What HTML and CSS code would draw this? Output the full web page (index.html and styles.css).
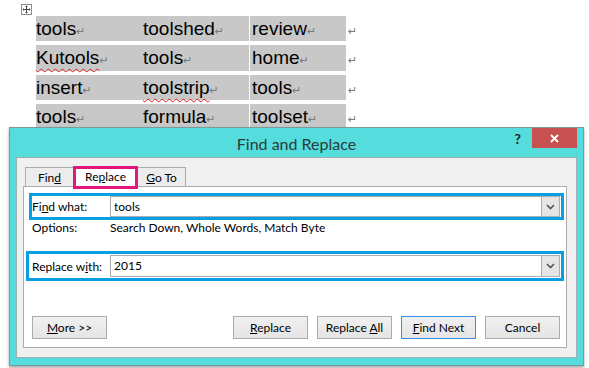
FILE: index.html
```html
<!DOCTYPE html>
<html lang="en">
<head>
    <meta charset="UTF-8">
    <meta name="viewport" content="width=device-width, initial-scale=1.0">
    <title>Find and Replace</title>
    <link rel="stylesheet" href="styles.css">
</head>
<body>
    <div class="doc">
        <div class="move-handle">
            <svg width="11" height="11" viewBox="0 0 11 11">
                <rect x="0.5" y="0.5" width="10" height="10" fill="#fff" stroke="#8c8c8c"/>
                <path d="M5.5 2v7M2 5.5h7" stroke="#444" stroke-width="1"/>
                <path d="M5.5 1.5l-1.5 1.5h3zM5.5 9.5l-1.5-1.5h3zM1.5 5.5l1.5-1.5v3zM9.5 5.5l-1.5-1.5v3z" fill="#444"/>
            </svg>
        </div>
        <table class="words">
            <tr>
                <td class="c1">tools<span class="pm">↵</span></td>
                <td class="c2">toolshed<span class="pm">↵</span></td>
                <td class="c3">review<span class="pm">↵</span></td>
                <td class="end"><span class="pm">↵</span></td>
            </tr>
            <tr class="tall">
                <td class="c1"><span class="typo">Kutools</span><span class="pm">↵</span></td>
                <td class="c2">tools<span class="pm">↵</span></td>
                <td class="c3">home<span class="pm">↵</span></td>
                <td class="end"><span class="pm">↵</span></td>
            </tr>
            <tr>
                <td class="c1">insert<span class="pm">↵</span></td>
                <td class="c2"><span class="typo">toolstrip</span><span class="pm">↵</span></td>
                <td class="c3">tools<span class="pm">↵</span></td>
                <td class="end"><span class="pm">↵</span></td>
            </tr>
            <tr>
                <td class="c1">tools<span class="pm">↵</span></td>
                <td class="c2">formula<span class="pm">↵</span></td>
                <td class="c3">toolset<span class="pm">↵</span></td>
                <td class="end"><span class="pm">↵</span></td>
            </tr>
        </table>
    </div>

    <div class="dialog">
        <div class="titlebar">
            <span></span>
            <div class="title">Find and Replace</div>
            <div class="controls">
                <span class="help">?</span>
                <span class="close">
                    <svg width="9" height="9" viewBox="0 0 9 9"><path d="M1 1l7 7M8 1l-7 7" stroke="#fff" stroke-width="1.8"/></svg>
                </span>
            </div>
        </div>
        <div class="panel">
            <div class="tabs">
                <div class="tab find-tab">Fin<u>d</u></div>
                <div class="tab active">Re<u>p</u>lace</div>
                <div class="tab goto-tab"><u>G</u>o To</div>
            </div>
            <div class="page">
                <div class="field find-box">
                    <label>Fi<u>n</u>d what:</label>
                    <div class="combo">
                        <span class="value">tools</span>
                        <span class="drop"><svg width="9" height="6" viewBox="0 0 9 6"><path d="M1 1l3.5 3.5L8 1" fill="none" stroke="#555" stroke-width="1.6"/></svg></span>
                    </div>
                </div>
                <div class="options">
                    <span class="lbl">Options:</span>
                    <span>Search Down, Whole Words, Match Byte</span>
                </div>
                <div class="field repl-box">
                    <label>Replace w<u>i</u>th:</label>
                    <div class="combo">
                        <span class="value">2015</span>
                        <span class="drop"><svg width="9" height="6" viewBox="0 0 9 6"><path d="M1 1l3.5 3.5L8 1" fill="none" stroke="#555" stroke-width="1.6"/></svg></span>
                    </div>
                </div>
                <div class="buttons">
                    <button class="btn"><u>M</u>ore &gt;&gt;</button>
                    <div class="spacer"></div>
                    <button class="btn"><u>R</u>eplace</button>
                    <button class="btn">Replace <u>A</u>ll</button>
                    <button class="btn default"><u>F</u>ind Next</button>
                    <button class="btn">Cancel</button>
                </div>
            </div>
        </div>
    </div>
</body>
</html>
```

FILE: styles.css
```css
body {
    margin: 0;
    padding: 0;
    background-color: #ffffff;
    font-family: "Liberation Sans", Arial, sans-serif;
}

/* document behind the dialog */
.doc {
    padding: 4px 0 0 21px;
}

.move-handle {
    width: 11px;
    height: 11px;
    line-height: 0;
}

.words {
    margin: -3px 0 0 15px;
    border-collapse: separate;
    border-spacing: 0 4px;
    font-size: 19px;
    color: #000;
}

.words td {
    height: 25px;
    padding: 0;
    line-height: 25px;
    vertical-align: top;
    background-color: #c8c8c8;
    white-space: nowrap;
}

.words tr.tall td {
    height: 26px;
}

.words .c1 {
    width: 107px;
}

.words .c2 {
    width: 106px;
}

.words .c3 {
    width: 94px;
    padding-left: 2px;
    border-left: 1px solid #fff;
}

.words .end {
    background: none;
    padding-left: 2px;
}

.pm {
    font-family: "DejaVu Sans", sans-serif;
    font-size: 11px;
    line-height: 0;
    color: #7a7a7a;
}

.typo {
    text-decoration: underline wavy #e01b1b;
    text-decoration-thickness: 1px;
    text-underline-offset: 4px;
    text-decoration-skip-ink: none;
}

/* dialog window */
.dialog {
    position: absolute;
    left: 9px;
    top: 127px;
    width: 575px;
    height: 239px;
    box-sizing: border-box;
    border: 1px solid #7d9a9a;
    background-color: #55dcdc;
    padding: 0 6px 7px 6px;
    display: flex;
    flex-direction: column;
    box-shadow: 0 2px 3px rgba(0, 0, 0, 0.35);
    font-family: Lato, "Noto Sans", sans-serif;
    font-size: 12px;
    color: #000;
}

.titlebar {
    height: 29px;
    display: grid;
    grid-template-columns: 1fr auto 1fr;
}

.title {
    font-size: 16px;
    color: #2b3b3b;
    line-height: 29px;
    padding-top: 1px;
}

.controls {
    justify-self: end;
    display: flex;
    align-items: flex-start;
}

.help {
    font-size: 14px;
    font-weight: bold;
    color: #222;
    margin: 3px 11px 0 0;
    line-height: 16px;
}

.close {
    width: 45px;
    height: 20px;
    background-color: #c75050;
    display: flex;
    align-items: center;
    justify-content: center;
}

.panel {
    flex: 1;
    border: 1px solid #9fb0b0;
    background-color: #f0f0f0;
    padding: 8px 9px 9px 6px;
    display: flex;
    flex-direction: column;
}

.tabs {
    display: flex;
    align-items: flex-end;
    height: 20px;
    margin-left: 2px;
}

.tab {
    height: 19px;
    box-sizing: border-box;
    border: 1px solid #acacac;
    border-bottom: none;
    background-color: #ececec;
    text-align: center;
    line-height: 19px;
}

.find-tab {
    width: 48px;
    border-right: none;
}

.goto-tab {
    width: 48px;
    border-left: none;
}

.tab.active {
    position: relative;
    z-index: 1;
    width: 65px;
    height: 23px;
    margin-bottom: -3px;
    border: 3px solid #e5157e;
    background-color: #fff;
    line-height: 16px;
}

.page {
    flex: 1;
    border: 1px solid #acacac;
    background-color: #fff;
    display: flex;
    flex-direction: column;
}

.field {
    display: flex;
    align-items: center;
    border: 3px solid #0a9fe2;
}

.field label {
    width: 78px;
    flex: none;
}

.find-box {
    margin: 6px 2px 0 5px;
    padding: 0 1px 0 0;
}

.repl-box {
    margin: 15px 2px 0 2px;
    padding: 1px 1px 1px 3px;
}

.combo {
    flex: 1;
    height: 21px;
    box-sizing: border-box;
    border: 1px solid #abadb3;
    background-color: #fff;
    display: flex;
    align-items: stretch;
}

.repl-box .combo {
    height: 22px;
}

.combo .value {
    flex: 1;
    padding-left: 3px;
    line-height: 19px;
}

.drop {
    width: 17px;
    background-color: #e5e5e5;
    border-left: 1px solid #acacac;
    display: flex;
    align-items: center;
    justify-content: center;
}

.options {
    display: flex;
    padding-left: 8px;
    line-height: 16px;
}

.options .lbl {
    width: 78px;
}

.buttons {
    margin: auto 6px 8px 8px;
    display: flex;
    gap: 9px;
}

.spacer {
    flex: 1;
}

.btn {
    width: 75px;
    height: 23px;
    padding: 0;
    border: 1px solid #acacac;
    background: linear-gradient(#f0f0f0, #e5e5e5);
    font-family: Lato, "Noto Sans", sans-serif;
    font-size: 12px;
    color: #000;
}

.btn.default {
    border-color: #3c8fe0;
}
```
